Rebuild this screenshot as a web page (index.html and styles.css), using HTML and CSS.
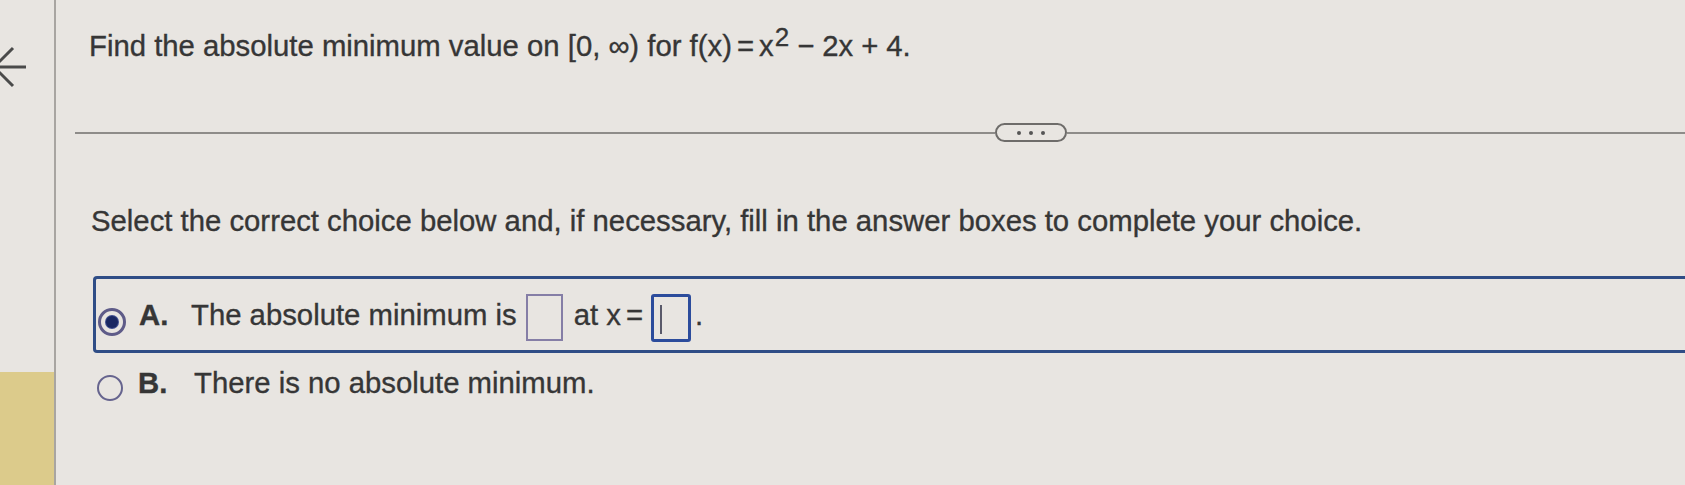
FILE: index.html
```html
<!DOCTYPE html>
<html>
<head>
<meta charset="utf-8">
<link rel="stylesheet" href="styles.css">
</head>
<body>
<div class="page">
  <aside class="sidebar">
    <svg class="back" width="30" height="50" viewBox="0 0 30 50">
      <path d="M26 23 H0" stroke="#4a4a4a" stroke-width="3" fill="none"/>
      <path d="M13 4 L-6 23 L13 42" stroke="#4a4a4a" stroke-width="3" fill="none"/>
    </svg>
    <div class="yellow"></div>
  </aside>
  <main class="main">
    <p class="title">Find the absolute minimum value on [0, ∞) for f(x)<span class="eq">=</span>x<sup class="sup">2</sup><span class="op">−</span>2x<span class="op">+</span>4.</p>
    <div class="sep">
      <div class="line line-left"></div>
      <div class="pill"><span class="dot"></span><span class="dot"></span><span class="dot"></span></div>
      <div class="line line-right"></div>
    </div>
    <p class="prompt">Select the correct choice below and, if necessary, fill in the answer boxes to complete your choice.</p>
    <div class="choice choice-a">
      <span class="radio radio-on"><span class="radio-dot"></span></span>
      <span class="label">A.</span>
      <span class="text">The absolute minimum is</span>
      <span class="input input-1"></span>
      <span class="text text-at">at x<span class="eq">=</span></span>
      <span class="input input-2"><span class="caret"></span></span>
      <span class="text text-dot">.</span>
    </div>
    <div class="choice choice-b">
      <span class="radio radio-off"></span>
      <span class="label">B.</span>
      <span class="text text-b">There is no absolute minimum.</span>
    </div>
  </main>
</div>
</body>
</html>
```
FILE: styles.css
```css
html, body {
  margin: 0;
  padding: 0;
  background: #e8e5e1;
  overflow: hidden;
}
body {
  font-family: "Liberation Sans", Arial, sans-serif;
  font-size: 29.3px;
  color: #363636;
  -webkit-text-stroke: 0.35px #363636;
}
.page {
  display: flex;
  width: 1685px;
  height: 485px;
}
.sidebar {
  width: 54px;
  border-right: 2px solid #a8a5a1;
  display: flex;
  flex-direction: column;
  flex-shrink: 0;
}
.back {
  margin-top: 44px;
  display: block;
}
.yellow {
  margin-top: auto;
  height: 113px;
  background: #dccb8b;
}
.main {
  flex: 1;
  min-width: 0;
  display: flex;
  flex-direction: column;
}
.title {
  margin: 30px 0 0 33px;
  line-height: 32px;
  white-space: nowrap;
}
.eq {
  margin: 0 5px;
}
.op {
  margin: 0 8px;
}
.sup {
  font-size: 26px;
  vertical-align: 10px;
  line-height: 0;
  margin-left: 1px;
}
.sep {
  margin: 61px 0 0 19px;
  display: flex;
  align-items: center;
  height: 19px;
}
.line {
  height: 2px;
  background: #8e8c89;
}
.line-left {
  width: 920px;
}
.line-right {
  flex: 1;
}
.pill {
  width: 68px;
  height: 15px;
  border: 2px solid #6e6c6a;
  border-radius: 10px;
  display: flex;
  justify-content: center;
  align-items: center;
  gap: 8px;
}
.dot {
  width: 4px;
  height: 4px;
  border-radius: 50%;
  background: #555;
}
.prompt {
  margin: 63px 0 0 35px;
  line-height: 32px;
  white-space: nowrap;
}
.choice {
  display: flex;
  align-items: flex-start;
}
.choice-a {
  margin: 39px 0 0 37px;
  border: 3px solid #2f4d86;
  border-right: none;
  border-radius: 4px 0 0 4px;
  padding: 13px 0 0 2px;
  box-sizing: border-box;
  height: 77px;
}
.choice-b {
  margin: 12px 0 0 40px;
}
.radio {
  box-sizing: border-box;
  border-radius: 50%;
  flex-shrink: 0;
  display: flex;
  align-items: center;
  justify-content: center;
}
.radio-on {
  width: 28px;
  height: 28px;
  border: 3px solid #5e5b88;
  margin-top: 16px;
}
.radio-dot {
  width: 12px;
  height: 12px;
  border-radius: 50%;
  background: #1a2862;
  box-shadow: 0 0 0 1px #3e4d8e;
}
.radio-off {
  width: 26px;
  height: 26px;
  border: 2.5px solid #66648e;
  margin: 10px 0 0 1px;
}
.label {
  font-weight: bold;
  width: 52px;
  margin-left: 13px;
  line-height: 32px;
  margin-top: 7px;
}
.choice-b .label {
  margin-top: 2px;
  width: 56px;
  margin-left: 15px;
}
.text {
  line-height: 32px;
  margin-top: 7px;
  white-space: nowrap;
}
.choice-b .text {
  margin-top: 2px;
}
.input {
  box-sizing: border-box;
  flex-shrink: 0;
}
.input-1 {
  width: 37px;
  height: 47px;
  border: 2px solid #857ea6;
  margin-left: 9px;
  margin-top: 2px;
}
.text-at {
  margin-left: 11px;
}
.text-at .eq {
  margin-right: 0;
}
.input-2 {
  width: 40px;
  height: 48px;
  border: 3px solid #2c4c9c;
  border-radius: 3px;
  margin-left: 8px;
  margin-top: 2px;
  display: flex;
  padding: 8px 0 0 6px;
}
.caret {
  width: 2px;
  height: 29px;
  background: #5a5a6a;
}
.text-dot {
  margin-left: 4px;
}
```
